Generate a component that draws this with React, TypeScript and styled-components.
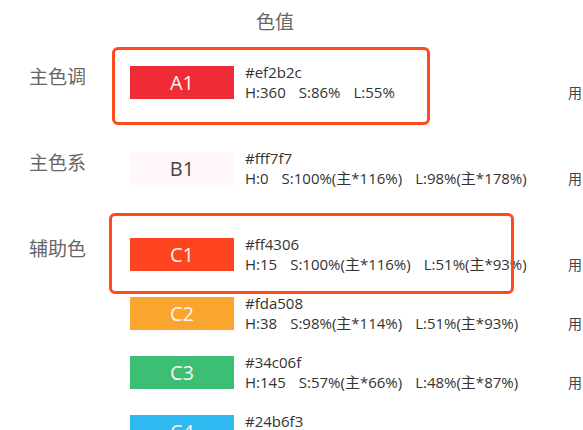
import React from "react";
import styled, { createGlobalStyle } from "styled-components";

const GlobalStyle = createGlobalStyle`
  html, body {
    margin: 0;
    padding: 0;
    background: #ffffff;
    overflow: hidden;
  }
  body {
    font-family: "Open Sans", "Noto Sans CJK SC", sans-serif;
    color: #333333;
  }
`;

const Page = styled.div`
  width: 583px;
  height: 430px;
  overflow: hidden;
`;

const Header = styled.div`
  display: flex;
  padding: 8px 0 32px 256px;
`;

const HeaderCell = styled.div`
  font-family: "Noto Sans CJK SC", sans-serif;
  font-size: 19px;
  line-height: 26px;
  color: #666666;
`;

const Sections = styled.div`
  display: flex;
  flex-direction: column;
  gap: 53px;
`;

const Section = styled.div`
  display: flex;
`;

const Label = styled.div`
  width: 130px;
  box-sizing: border-box;
  padding-left: 29px;
  margin-top: -3px;
  font-family: "Noto Sans CJK SC", sans-serif;
  font-size: 19px;
  line-height: 26px;
  color: #666666;
`;

const Items = styled.div`
  display: flex;
  flex-direction: column;
  gap: 26px;
`;

const Item = styled.div`
  position: relative;
  display: flex;
  align-items: flex-start;
  height: 33px;
`;

const Swatch = styled.div<{ $bg: string; $dark?: boolean }>`
  width: 104px;
  height: 33px;
  flex: none;
  display: flex;
  align-items: center;
  justify-content: center;
  background: ${(p) => p.$bg};
  color: ${(p) => (p.$dark ? "#444444" : "#fdf3ee")};
  font-size: 20px;
`;

const Info = styled.div`
  width: 323px;
  margin-left: 11px;
  margin-top: -4px;
  font-size: 15px;
  line-height: 20px;
  color: #333333;
`;

const Hsl = styled.div`
  display: flex;
  white-space: nowrap;
`;

const HslPart = styled.span`
  margin-right: 13px;
`;

const Usage = styled.div`
  margin-top: 16px;
  font-family: "Noto Sans CJK SC", sans-serif;
  font-size: 14px;
  line-height: 20px;
  color: #444444;
  white-space: nowrap;
`;

const Highlight = styled.div<{ $l: number; $t: number; $w: number; $h: number }>`
  position: absolute;
  left: ${(p) => p.$l}px;
  top: ${(p) => p.$t}px;
  width: ${(p) => p.$w}px;
  height: ${(p) => p.$h}px;
  box-sizing: border-box;
  border: 3px solid #ff4a1e;
  border-radius: 6px;
  pointer-events: none;
`;

type Color = {
  name: string;
  hex: string;
  fill: string;
  h: string;
  s: string;
  l: string;
  dark?: boolean;
  box?: { l: number; t: number; w: number; h: number };
};

type Group = { label: string; colors: Color[] };

const groups: Group[] = [
  {
    label: "主色调",
    colors: [
      {
        name: "A1",
        hex: "#ef2b2c",
        fill: "#ef2c36",
        h: "H:360",
        s: "S:86%",
        l: "L:55%",
        box: { l: -18, t: -19, w: 318, h: 78 },
      },
    ],
  },
  {
    label: "主色系",
    colors: [
      {
        name: "B1",
        hex: "#fff7f7",
        fill: "#fff7f7",
        h: "H:0",
        s: "S:100%(主*116%)",
        l: "L:98%(主*178%)",
        dark: true,
      },
    ],
  },
  {
    label: "辅助色",
    colors: [
      {
        name: "C1",
        hex: "#ff4306",
        fill: "#ff4520",
        h: "H:15",
        s: "S:100%(主*116%)",
        l: "L:51%(主*93%)",
        box: { l: -21, t: -25, w: 405, h: 81 },
      },
      { name: "C2", hex: "#fda508", fill: "#f9a52e", h: "H:38", s: "S:98%(主*114%)", l: "L:51%(主*93%)" },
      { name: "C3", hex: "#34c06f", fill: "#3cbf74", h: "H:145", s: "S:57%(主*66%)", l: "L:48%(主*87%)" },
      { name: "C4", hex: "#24b6f3", fill: "#30b8f0", h: "H:198", s: "S:90%(主*105%)", l: "L:55%(主*100%)" },
    ],
  },
];

function App() {
  return (
    <Page>
      <GlobalStyle />
      <Header>
        <HeaderCell>色值</HeaderCell>
      </Header>
      <Sections>
        {groups.map((g) => (
          <Section key={g.label}>
            <Label>{g.label}</Label>
            <Items>
              {g.colors.map((c) => (
                <Item key={c.name}>
                  {c.box && <Highlight $l={c.box.l} $t={c.box.t} $w={c.box.w} $h={c.box.h} />}
                  <Swatch $bg={c.fill} $dark={c.dark}>
                    {c.name}
                  </Swatch>
                  <Info>
                    <div>{c.hex}</div>
                    <Hsl>
                      <HslPart>{c.h}</HslPart>
                      <HslPart>{c.s}</HslPart>
                      <HslPart>{c.l}</HslPart>
                    </Hsl>
                  </Info>
                  <Usage>用</Usage>
                </Item>
              ))}
            </Items>
          </Section>
        ))}
      </Sections>
    </Page>
  );
}

export default App;
